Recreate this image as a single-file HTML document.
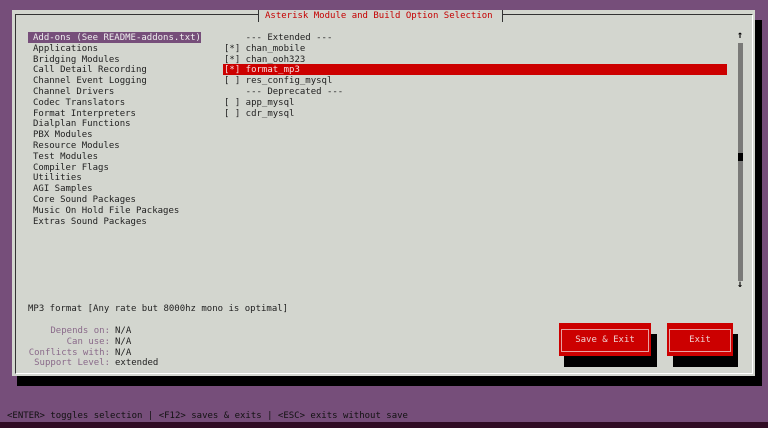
<!DOCTYPE html>
<html><head><style>
body{margin:0;width:768px;height:428px;background:#764e7a;position:relative;overflow:hidden;font-family:"DejaVu Sans Mono","Liberation Mono",monospace;font-size:9px;}
.a{position:absolute;white-space:pre;line-height:10.8px;}
</style></head><body>
<div class="a" style="left:17px;top:376px;width:745px;height:10px;background:#000"></div>
<div class="a" style="left:755px;top:20px;width:7px;height:366px;background:#000"></div>
<div class="a" style="left:12px;top:10px;width:743px;height:366px;background:#d3d6cf"></div>
<div class="a" style="left:15px;top:14px;width:736px;height:358px;border:1px solid #333;border-right-color:#fff;border-bottom-color:#fff"></div>
<div class="a" style="left:258px;top:10px;width:243px;height:12px;background:#d3d6cf;border-left:1px solid #333;border-right:1px solid #333"></div>
<div class="a" style="left:265px;top:11px;color:#c40000">Asterisk Module and Build Option Selection</div>
<div class="a" style="left:28px;top:32px;width:173px;height:11px;background:#764e7a"></div>
<div class="a" style="left:223px;top:64px;width:504px;height:11px;background:#cc0000"></div>
<div class="a" style="left:33px;top:33px;color:#222"><span style="color:#eee">Add-ons (See README-addons.txt)</span>
Applications
Bridging Modules
Call Detail Recording
Channel Event Logging
Channel Drivers
Codec Translators
Format Interpreters
Dialplan Functions
PBX Modules
Resource Modules
Test Modules
Compiler Flags
Utilities
AGI Samples
Core Sound Packages
Music On Hold File Packages
Extras Sound Packages</div>
<div class="a" style="left:224px;top:33px;color:#222">    --- Extended ---
[*] chan_mobile
[*] chan_ooh323
<span style="color:#f4dede">[*] format_mp3</span>
[ ] res_config_mysql
    --- Deprecated ---
[ ] app_mysql
[ ] cdr_mysql</div>
<div class="a" style="left:737px;top:31px;color:#000;font-size:10px;font-weight:bold">↑</div>
<div class="a" style="left:738px;top:43px;width:5px;height:238px;background:#7a7a78"></div>
<div class="a" style="left:738px;top:153px;width:5px;height:8px;background:#000"></div>
<div class="a" style="left:737px;top:280px;color:#000;font-size:10px;font-weight:bold">↓</div>
<div class="a" style="left:28px;top:304px;color:#222">MP3 format [Any rate but 8000hz mono is optimal]</div>
<div class="a" style="left:22px;top:326px;color:#8a6a8a;text-align:right;width:88px">Depends on:
Can use:
Conflicts with:
Support Level:</div>
<div class="a" style="left:115px;top:326px;color:#222">N/A
N/A
N/A
extended</div>
<div class="a" style="left:564px;top:334px;width:93px;height:33px;background:#000"></div>
<div class="a" style="left:559px;top:323px;width:92px;height:33px;background:#cc0000"></div>
<div class="a" style="left:561px;top:329px;width:86px;height:21px;border:1px solid #e8a0a0"></div>
<div class="a" style="left:559px;top:335px;width:92px;text-align:center;color:#f0d0d0">Save &amp; Exit</div>
<div class="a" style="left:673px;top:334px;width:65px;height:33px;background:#000"></div>
<div class="a" style="left:667px;top:323px;width:66px;height:33px;background:#cc0000"></div>
<div class="a" style="left:669px;top:329px;width:60px;height:21px;border:1px solid #e8a0a0"></div>
<div class="a" style="left:667px;top:335px;width:66px;text-align:center;color:#f0d0d0">Exit</div>
<div class="a" style="left:7px;top:411px;color:#111">&lt;ENTER&gt; toggles selection | &lt;F12&gt; saves &amp; exits | &lt;ESC&gt; exits without save</div>
<div class="a" style="left:0;top:422px;width:768px;height:6px;background:#300c24"></div>
</body></html>
